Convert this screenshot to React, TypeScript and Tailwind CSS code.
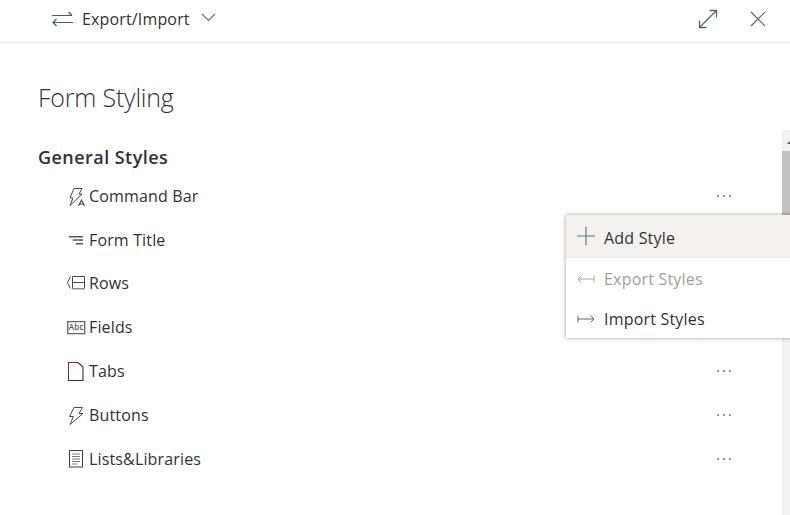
import { ReactNode } from "react";

const font = { fontFamily: '"Open Sans", sans-serif' };

function DotsIcon() {
  return (
    <svg width="16" height="4" viewBox="0 0 16 4" className="text-[#2f4560]">
      <rect x="1.250" y="1.250" width="1.500" height="1.500" fill="currentColor" />
      <rect x="7.250" y="1.250" width="1.500" height="1.500" fill="currentColor" />
      <rect x="13.250" y="1.250" width="1.500" height="1.500" fill="currentColor" />
    </svg>
  );
}

const stroke = {
  fill: "none",
  stroke: "#4a4a4a",
  strokeWidth: 1,
};

const CommandBarIcon = (
  <svg width="20" height="20" viewBox="0 0 20 20" {...stroke}>
    <path d="M7 2.500h8l-3 5.500h3L3 19.500 6 12H3z" />
    <path d="M11.500 20l3-6 3 6M12.500 18h4" strokeWidth="1.200" />
  </svg>
);

const FormTitleIcon = (
  <svg width="20" height="20" viewBox="0 0 20 20" fill="none" stroke="#555" strokeWidth="1.400">
    <path d="M2 6.700h14M5.700 10H16M9 13.700h7" />
  </svg>
);

const RowsIcon = (
  <svg width="20" height="20" viewBox="0 0 20 20" {...stroke}>
    <path d="M3.500 3.500L0.500 9.500l3 6" />
    <path d="M17.500 3.500H5.500v12M5.500 9.500h12M17.500 3.500v12" />
    <path d="M5 15.700h13" stroke="#8a8a8a" strokeWidth="1.500" />
  </svg>
);

const FieldsIcon = (
  <svg width="20" height="20" viewBox="0 0 20 20">
    <rect x="0.700" y="4.600" width="17" height="12" fill="#fff" stroke="#666" strokeWidth="1.300" />
    <text x="9.200" y="13.300" textAnchor="middle" fontSize="8" fontWeight="600" fill="#555" style={font}>
      Abc
    </text>
  </svg>
);

const TabsIcon = (
  <svg width="20" height="20" viewBox="0 0 20 20" fill="none" strokeWidth="1.100">
    <path d="M1.500 19.500V1.500h9.500" stroke="#7a2a55" />
    <path d="M11 1.500l5 4.500v13.500H1" stroke="#33334a" />
  </svg>
);

const ButtonsIcon = (
  <svg width="20" height="20" viewBox="0 0 20 20" {...stroke}>
    <path d="M7 2.500h8.500l-3.500 6h4L3 19.500l3.500-8H2.500z" />
  </svg>
);

const ListsIcon = (
  <svg width="20" height="20" viewBox="0 0 20 20" {...stroke}>
    <rect x="2.500" y="1.500" width="13" height="16.500" stroke="#3f3f3f" />
    <path d="M5 5h8M5 7.500h8M5 10h8M5 12.500h8M5 15h5" stroke="#7a7a7a" />
  </svg>
);

const rows: { label: string; icon: ReactNode; dots: boolean }[] = [
  { label: "Command Bar", icon: CommandBarIcon, dots: true },
  { label: "Form Title", icon: FormTitleIcon, dots: false },
  { label: "Rows", icon: RowsIcon, dots: false },
  { label: "Fields", icon: FieldsIcon, dots: false },
  { label: "Tabs", icon: TabsIcon, dots: true },
  { label: "Buttons", icon: ButtonsIcon, dots: true },
  { label: "Lists&Libraries", icon: ListsIcon, dots: true },
];

function Header() {
  return (
    <div className="flex h-[43px] shrink-0 items-center border-b border-[#eaeaea] pb-[5px] pl-[52px] pr-[24px]">
      <svg width="22" height="16" viewBox="0 0 22 16" fill="none" stroke="#4f5b62" strokeWidth="1.200">
        <path d="M0 4.500h20M16.500 1l3.500 3.500" />
        <path d="M21 11.500H1M4.500 8L1 11.500 4.500 15" />
      </svg>
      <span className="ml-[8px] text-[16px] tracking-[0.15px] text-[#323130]">Export/Import</span>
      <svg className="ml-[11px] -mt-[3px]" width="15" height="9" viewBox="0 0 15 9" fill="none" stroke="#5f6b72" strokeWidth="1.100">
        <path d="M1 1l6.500 6.500L14 1" />
      </svg>
      <svg className="ml-auto" width="20" height="20" viewBox="0 0 20 20" fill="none" stroke="#55636c" strokeWidth="1.300">
        <path d="M1.500 18.500l17-17M11.500 1.500h7v7M1.500 11.500v7h7" />
      </svg>
      <svg className="ml-[32px]" width="16" height="16" viewBox="0 0 16 16" fill="none" stroke="#55636c" strokeWidth="1.100">
        <path d="M1 1l14 14M15 1L1 15" />
      </svg>
    </div>
  );
}

function StyleMenu() {
  return (
    <div className="absolute left-[566px] top-[215px] w-[240px] bg-white text-[16px] tracking-[0.2px] text-[#323130] shadow-[0_0_4px_rgba(0,0,0,0.4)]">
      <div className="flex h-[43px] items-center border-b border-[#eaeaea] bg-[#f3f2f1] pl-[11px]">
        <svg width="18" height="18" viewBox="0 0 18 18" fill="none" stroke="#6b767d" strokeWidth="1.200">
          <path d="M9 0v18M0 9h18" />
        </svg>
        <span className="ml-[9px] mt-[3px]">Add Style</span>
      </div>
      <div className="flex h-[41px] items-center pl-[11px] text-[#a19f9d]">
        <svg width="18" height="10" viewBox="0 0 18 10" fill="none" stroke="#a6a6a6">
          <path d="M1 5h16M4.500 1.500L1 5l3.500 3.500M17 1.500v7" />
        </svg>
        <span className="ml-[9px] mt-[1px]">Export Styles</span>
      </div>
      <div className="flex h-[39px] items-center pl-[11px]">
        <svg width="18" height="10" viewBox="0 0 18 10" fill="none" stroke="#5f6b72">
          <path d="M1 5h16M13.500 1.500L17 5l-3.500 3.500M1 1.500v7" />
        </svg>
        <span className="ml-[9px] mt-[1px]">Import Styles</span>
      </div>
    </div>
  );
}

export default function App() {
  return (
    <div className="relative flex h-[515px] w-[790px] flex-col overflow-hidden bg-white" style={font}>
      <Header />
      <div className="flex min-h-0 flex-1">
        <div className="min-w-0 flex-1 pl-[38px]">
          <h1 className="mt-[34px] text-[25px] font-light leading-[40px] tracking-[-0.2px] text-[#323130]">Form Styling</h1>
          <h2 className="mt-[28px] text-[18px] font-semibold leading-[24px] tracking-[0.45px] text-[#323130]">General Styles</h2>
          <ul className="mt-[5px] pl-[29px] pr-[50px]">
            {rows.map((row) => (
              <li key={row.label} className="flex h-[43.800px] items-center text-[16px] tracking-[0.15px] text-[#323130]">
                <span className="flex w-[22px] shrink-0">{row.icon}</span>
                <span>{row.label}</span>
                {row.dots && (
                  <span className="ml-auto flex">
                    <DotsIcon />
                  </span>
                )}
              </li>
            ))}
          </ul>
        </div>
        <div className="mt-[87px] flex w-[8px] shrink-0 flex-col bg-[#f1f1f1]">
          <div className="flex h-[21px] justify-end pt-[11px]">
            <svg width="3" height="3" viewBox="0 0 3 3">
              <path d="M0 3L3 0v3z" fill="#505050" />
            </svg>
          </div>
          <div className="h-[100px] bg-[#c1c1c1]" />
        </div>
      </div>
      <StyleMenu />
    </div>
  );
}
